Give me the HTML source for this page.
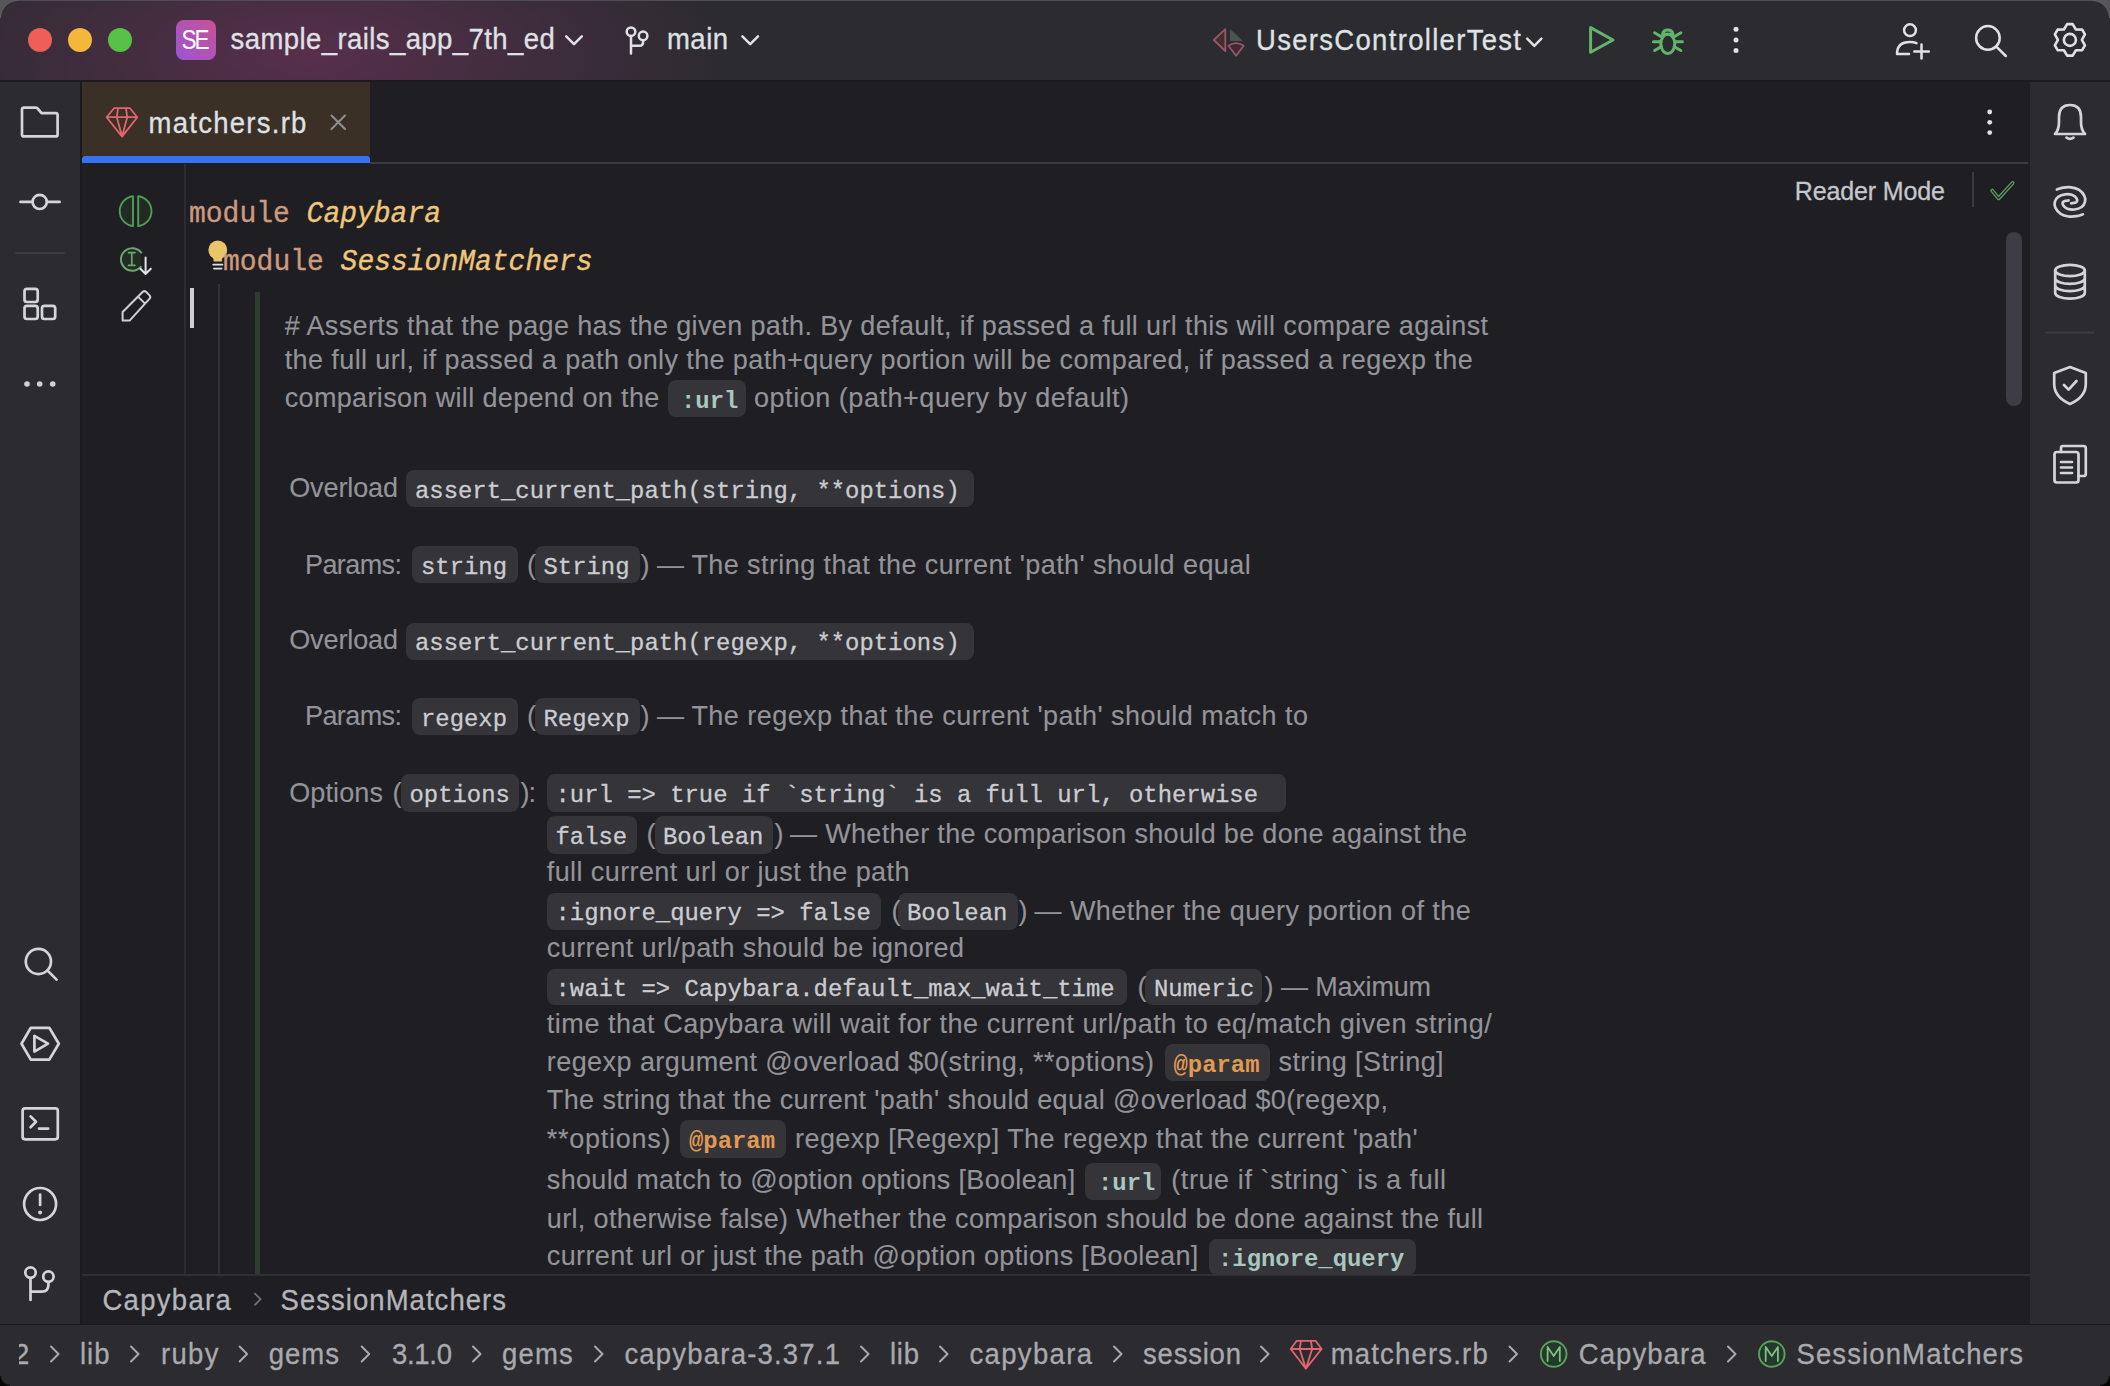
<!DOCTYPE html>
<html><head><meta charset="utf-8">
<style>
html,body{margin:0;padding:0;width:2110px;height:1386px;overflow:hidden;background:#1e1f22;font-family:"Liberation Sans",sans-serif}
.p{position:absolute}
.t{position:absolute;white-space:pre;line-height:normal}
.b{position:absolute}
</style></head><body>
<!-- title bar -->
<div class="p" style="left:0;top:0;width:2110px;height:80px;background:#2c2b30"></div>
<div class="p" style="left:0;top:0;width:1100px;height:80px;background:radial-gradient(ellipse 420px 170px at 310px 55px, rgba(140,52,110,0.45), rgba(140,52,110,0.16) 62%, rgba(140,52,110,0) 100%)"></div>
<div class="p" style="left:0;top:80px;width:2110px;height:2px;background:#1b1a1f"></div>
<div class="p" style="left:0;top:0;width:2110px;height:1px;background:#4f4e55"></div>
<div class="p" style="left:0;top:0;width:18px;height:18px;background:radial-gradient(circle at 18px 18px, rgba(0,0,0,0) 16.5px, #5b5b60 17.5px, #56565a 19px)"></div>
<div class="p" style="left:2092px;top:0;width:18px;height:18px;background:radial-gradient(circle at 0px 18px, rgba(0,0,0,0) 16.5px, #5b5b60 17.5px, #56565a 19px)"></div>
<!-- left strip -->
<div class="p" style="left:0;top:82px;width:80px;height:1243px;background:#2c2b30"></div>
<div class="p" style="left:80px;top:82px;width:2px;height:1243px;background:#1b1a1f"></div>
<!-- right strip -->
<div class="p" style="left:2030px;top:82px;width:80px;height:1243px;background:#2c2b30"></div>
<!-- editor -->
<div class="p" style="left:82px;top:82px;width:1948px;height:1243px;background:#1f1e23"></div>
<!-- tab -->
<div class="p" style="left:82px;top:82px;width:288px;height:74px;background:#3a3025"></div>
<div class="p" style="left:82px;top:156px;width:288px;height:7px;background:#3574f0;border-radius:3px 3px 0 0"></div>
<div class="p" style="left:370px;top:162px;width:1658px;height:2px;background:#393b40"></div>
<!-- gutter line -->
<div class="p" style="left:184px;top:164px;width:2px;height:1110px;background:#2b2d30"></div>
<!-- indent guides -->
<div class="p" style="left:218px;top:284px;width:2px;height:990px;background:#313236"></div>
<div class="p" style="left:255px;top:292px;width:5px;height:982px;background:#2f3d31"></div>
<!-- caret -->
<div class="p" style="left:190px;top:288px;width:4px;height:40px;background:#ced0d6"></div>
<!-- scrollbar -->
<div class="p" style="left:2006px;top:232px;width:16px;height:174px;background:#3e3d43;border-radius:8px"></div>
<!-- reader mode separator -->
<div class="p" style="left:1972px;top:172px;width:2px;height:35px;background:#393b40"></div>
<!-- breadcrumbs bar -->
<div class="p" style="left:82px;top:1274px;width:1948px;height:2px;background:#2f3034"></div>
<!-- status bar -->
<div class="p" style="left:0;top:1325px;width:2110px;height:61px;background:#2c2b30"></div>
<div class="p" style="left:0;top:1324px;width:2110px;height:1px;background:#1b1a1f"></div>
<div class="p" style="left:0;top:1376px;width:10px;height:10px;background:radial-gradient(circle at 10px 0px, rgba(0,0,0,0) 8px, #050505 10px)"></div>
<div class="p" style="left:2100px;top:1376px;width:10px;height:10px;background:radial-gradient(circle at 0px 0px, rgba(0,0,0,0) 8px, #050505 10px)"></div>
<div class="b" style="left:668.4px;top:380.2px;width:77.4px;height:37.1px;background:#343439;border-radius:8px"></div>
<div class="b" style="left:406.0px;top:470.3px;width:567.5px;height:37.0px;background:#343439;border-radius:8px"></div>
<div class="b" style="left:412.4px;top:546.3px;width:105.3px;height:36.9px;background:#343439;border-radius:8px"></div>
<div class="b" style="left:535.0px;top:546.3px;width:104.7px;height:36.9px;background:#343439;border-radius:8px"></div>
<div class="b" style="left:406.0px;top:622.7px;width:567.5px;height:36.9px;background:#343439;border-radius:8px"></div>
<div class="b" style="left:412.4px;top:697.8px;width:105.3px;height:37.7px;background:#343439;border-radius:8px"></div>
<div class="b" style="left:535.0px;top:697.8px;width:104.7px;height:37.7px;background:#343439;border-radius:8px"></div>
<div class="b" style="left:400.6px;top:774.3px;width:118.8px;height:37.5px;background:#343439;border-radius:8px"></div>
<div class="b" style="left:546.5px;top:774.3px;width:739.4px;height:37.5px;background:#343439;border-radius:8px"></div>
<div class="b" style="left:546.5px;top:816.2px;width:90.7px;height:37.4px;background:#343439;border-radius:8px"></div>
<div class="b" style="left:654.5px;top:816.2px;width:118.2px;height:37.4px;background:#343439;border-radius:8px"></div>
<div class="b" style="left:546.5px;top:892.6px;width:334.8px;height:37.0px;background:#343439;border-radius:8px"></div>
<div class="b" style="left:898.0px;top:892.6px;width:119.8px;height:37.0px;background:#343439;border-radius:8px"></div>
<div class="b" style="left:546.5px;top:969.0px;width:580.5px;height:36.2px;background:#343439;border-radius:8px"></div>
<div class="b" style="left:1145.4px;top:969.0px;width:117.1px;height:36.2px;background:#343439;border-radius:8px"></div>
<div class="b" style="left:1164.6px;top:1044.4px;width:105.3px;height:36.9px;background:#343439;border-radius:8px"></div>
<div class="b" style="left:680.3px;top:1120.3px;width:105.3px;height:37.4px;background:#343439;border-radius:8px"></div>
<div class="b" style="left:1085.0px;top:1162.7px;width:76.4px;height:36.9px;background:#343439;border-radius:8px"></div>
<div class="b" style="left:1209.0px;top:1238.6px;width:207.0px;height:36.4px;background:#343439;border-radius:8px"></div>
<svg class="p" style="left:0;top:0" width="2110" height="1386" viewBox="0 0 2110 1386" fill="none" stroke-linecap="round" stroke-linejoin="round">
<defs>
<linearGradient id="se" x1="0" y1="1" x2="1" y2="0"><stop offset="0" stop-color="#9b55d6"/><stop offset="1" stop-color="#c85294"/></linearGradient>
</defs>
<!-- traffic lights -->
<circle cx="40" cy="40" r="12" fill="#ee5f57"/>
<circle cx="80" cy="40" r="12" fill="#f4b73b"/>
<circle cx="120" cy="40" r="12" fill="#57c247"/>
<!-- SE badge -->
<rect x="176" y="20" width="40" height="40" rx="8" fill="url(#se)"/>
<g stroke="#dfe1e5" stroke-width="2.5">
<!-- chevrons -->
<polyline points="566.2,36.4 574,44.2 581.8,36.4"/>
<polyline points="742.4,36.4 750.2,44.2 758,36.4"/>
<polyline points="1527.2,38.7 1534.3,45.8 1541.4,38.7"/>
<!-- branch -->
<circle cx="631" cy="31.7" r="4.3"/>
<circle cx="643.1" cy="35.9" r="4.3"/>
<path d="M631 36 V53.6 M643.1 40.2 V42 Q643.1 45.8 639.3 45.8 H631"/>
<!-- add user -->
<circle cx="1910" cy="30.2" r="5.9"/>
<path d="M1897 54 H1909 M1897 54 Q1897 42 1910 42 Q1914 42 1916.5 43.2 M1921.5 44.5 V58.5 M1914.3 51.5 H1928.8"/>
<!-- search -->
<circle cx="1987.9" cy="37.9" r="11.8"/>
<path d="M1996.6 46.8 L2005.8 56"/>
<!-- gear inner -->
<circle cx="2069.9" cy="39.9" r="6" stroke-width="2.6"/>
</g>
<path stroke="#dfe1e5" stroke-width="2.6" d="M2067.12 24.14 L2072.68 24.14 L2075.90 29.51 L2082.16 29.62 L2084.94 34.43 L2081.90 39.90 L2084.94 45.37 L2082.16 50.18 L2075.90 50.29 L2072.68 55.66 L2067.12 55.66 L2063.90 50.29 L2057.64 50.18 L2054.86 45.37 L2057.90 39.90 L2054.86 34.43 L2057.64 29.62 L2063.90 29.51 Z"/>
<!-- test icon -->
<path d="M1213.8 40 L1225.3 29.2 V51 Z" stroke="#9a5566" stroke-width="1.8" fill="rgba(150,60,60,0.2)"/>
<path d="M1230 29 L1243 41 H1230 Z" fill="#47564e"/>
<path d="M1228.5 45.7 Q1236 40.5 1243.7 45.7 L1236.1 55.8 Z" stroke="#9a5566" stroke-width="1.8" fill="rgba(120,40,60,0.25)"/>
<!-- play/bug -->
<g stroke="#62b46a" stroke-width="3">
<path d="M1590.6 27.6 L1613 40 L1590.6 52.3 Z"/>
<ellipse cx="1667.8" cy="43.8" rx="7" ry="9.6"/>
<path d="M1662.6 34.2 A5.3 5.3 0 0 1 1673 34.2 Z"/>
<path d="M1653.4 41.7 H1661 M1674.6 41.7 H1682.4 M1654.6 32.8 L1661.4 36.8 M1680.9 32.8 L1674.1 36.8 M1654.6 50.5 L1661.4 46.6 M1680.9 50.5 L1674.1 46.6"/>
</g>
<g fill="#dfe1e5">
<circle cx="1736" cy="29.2" r="2.5"/><circle cx="1736" cy="39.9" r="2.5"/><circle cx="1736" cy="50.6" r="2.5"/>
<circle cx="1989.7" cy="112" r="2.4"/><circle cx="1989.7" cy="122.3" r="2.4"/><circle cx="1989.7" cy="132.6" r="2.4"/>
</g>
<!-- tab ruby -->
<g stroke="#e0656f" stroke-width="1.8">
<path d="M114 108.2 H130 L137.3 117.2 L122.1 136.6 L106.6 117.2 Z M106.6 117.2 H137.3 M118 108.2 L116.8 117.2 L122.1 136.6 L127.2 117.2 L126 108.2"/>
</g>
<!-- tab close -->
<path d="M331.5 115.5 L345 129 M345 115.5 L331.5 129" stroke="#8e9095" stroke-width="2"/>
<!-- reader check -->
<path d="M1992.2 190.6 L1998.6 198.4 L2012.6 183" stroke="#5e9c64" stroke-width="3.8"/><path d="M1992.2 190.6 L1998.6 198.4 L2012.6 183" stroke="#1f1e23" stroke-width="1.2"/>
<!-- left strip icons -->
<g stroke="#d4d5db" stroke-width="2.7">
<path d="M24 107.6 H35.8 Q37 107.6 37.8 108.6 L41.5 113.1 H55.6 Q57.6 113.1 57.6 115.1 V134.4 Q57.6 136.4 55.6 136.4 H24 Q22 136.4 22 134.4 V109.6 Q22 107.6 24 107.6 Z"/>
<path d="M20.5 201.9 H32.4 M47 201.9 H59.6"/>
<circle cx="39.7" cy="201.9" r="7.1"/>
<rect x="24.5" y="288.8" width="13.2" height="13.2" rx="2.5"/>
<rect x="24.5" y="305.8" width="13.2" height="13.2" rx="2.5"/>
<rect x="42" y="305.8" width="13.2" height="13.2" rx="2.5"/>
<circle cx="38.4" cy="961.5" r="12.6"/>
<path d="M47.6 970.6 L56.6 979.6"/>
<path d="M21.5 1043.7 L30.8 1027.8 H49.3 L58.8 1043.7 L49.3 1059.6 H30.8 Z"/>
<path d="M34.4 1035.8 V1051.6 L48 1043.7 Z"/>
<rect x="22.6" y="1108.3" width="35.2" height="31" rx="2.5"/>
<path d="M30.6 1116.4 L36 1121.8 L30.6 1127.2 M39 1128.6 H48.2"/>
<circle cx="40.1" cy="1204" r="16"/>
<path d="M40.1 1194.6 V1205"/>
<circle cx="30.5" cy="1272.6" r="5.2"/>
<circle cx="48.4" cy="1276.6" r="5.2"/>
<path d="M30.5 1278 V1300 M48.4 1282 V1285 Q48.4 1291.6 41.8 1291.6 H30.5"/>
</g>
<g fill="#ced0d6"><circle cx="27" cy="384" r="2.8"/><circle cx="39.7" cy="384" r="2.8"/><circle cx="52.7" cy="384" r="2.8"/><circle cx="40.1" cy="1212.4" r="2"/></g>
<path d="M16 252.9 H64" stroke="#3c3d42" stroke-width="2"/>
<!-- right strip icons -->
<g stroke="#d4d5db" stroke-width="2.7">
<path d="M2055 134 Q2059 130 2059 122 V117 Q2059 105 2070 105 Q2081 105 2081 117 V122 Q2081 130 2085 134 Z"/>
<path d="M2066.5 137.6 Q2070 140 2073.5 137.6"/>
<path d="M2056.89 189.52 C2057.95 189.21 2060.86 187.99 2063.24 187.62 C2065.62 187.25 2068.53 186.93 2071.17 187.30 C2073.82 187.67 2076.92 188.41 2079.11 189.84 C2081.31 191.27 2083.37 193.86 2084.35 195.87 C2085.33 197.88 2085.43 200.05 2084.98 201.90 C2084.53 203.76 2083.37 205.71 2081.65 206.98 C2079.93 208.25 2077.05 209.23 2074.67 209.52 C2072.29 209.81 2069.30 209.47 2067.37 208.73 C2065.43 207.99 2063.71 206.27 2063.08 205.08 C2062.44 203.89 2062.63 202.35 2063.56 201.59 C2064.48 200.82 2067.79 200.66 2068.63 200.48 M2082.92 214.29 C2081.86 214.60 2078.95 215.82 2076.57 216.19 C2074.19 216.56 2071.28 216.88 2068.63 216.51 C2065.99 216.14 2062.89 215.40 2060.70 213.97 C2058.50 212.54 2056.44 209.95 2055.46 207.94 C2054.48 205.93 2054.38 203.76 2054.83 201.90 C2055.28 200.05 2056.44 198.10 2058.16 196.83 C2059.88 195.56 2062.76 194.58 2065.14 194.29 C2067.52 193.99 2070.51 194.34 2072.44 195.08 C2074.38 195.82 2076.10 197.54 2076.73 198.73 C2077.37 199.92 2077.18 201.46 2076.25 202.22 C2075.33 202.99 2072.02 203.15 2071.17 203.33"/>
<ellipse cx="2070" cy="270.5" rx="14.8" ry="5.6"/>
<path d="M2055.2 270.5 V293 A14.8 5.6 0 0 0 2084.8 293 V270.5 M2055.2 278.2 A14.8 5.6 0 0 0 2084.8 278.2 M2055.2 285.6 A14.8 5.6 0 0 0 2084.8 285.6"/>
<path d="M2070 367 L2085.8 373 V384 Q2085.8 397 2070 404 Q2054.2 397 2054.2 384 V373 Z"/>
<path d="M2064 385 L2068.6 389.6 L2076.5 381"/>
<rect x="2054.5" y="452" width="24" height="30.5" rx="2.5"/>
<path d="M2061 452 V448 Q2061 446 2063 446 H2083.5 Q2085.8 446 2085.8 448.3 V474 Q2085.8 476 2083.5 476 H2078.5"/>
<path d="M2061 462 H2072 M2061 467.5 H2072 M2061 473 H2072"/>
</g>
<path d="M2046.4 332.4 H2093.3" stroke="#3c3d42" stroke-width="2"/>
<!-- gutter icons -->
<g stroke="#4f9d58" stroke-width="1.9">
<path d="M133 196.3 A15 15 0 0 0 133 226.1 Z" fill="#222a24"/>
<path d="M138.2 196.3 A15 15 0 0 1 138.2 226.1 Z" fill="#222a24"/>
<path d="M140.8 266.8 A11.3 11.3 0 1 1 141.2 252.6" stroke="#6aa772" fill="#232c25"/>
<path d="M128.5 252.6 H135 M131.8 252.6 V265.3 M128.5 265.3 H135" stroke="#6aa772" stroke-width="1.7"/>
</g>
<path d="M145.6 257.6 V273.8 M140.4 268.8 L145.6 274 L150.8 268.8" stroke="#dfe1e5" stroke-width="2"/>
<path d="M122.6 312 L142.8 291.8 Q144.4 290.4 146 291.8 L149.6 295.4 Q151 297 149.6 298.6 L129.6 320.6 H122.6 Z M138 296.6 L145 303.6" stroke="#ced0d6" stroke-width="2"/>
<!-- lightbulb -->
<circle cx="217.8" cy="250" r="9.4" fill="#e9c46b"/>
<path d="M213 254 H222.5 L221.8 261.5 H213.7 Z" fill="#e9c46b"/>
<path d="M213.2 264.6 H222.4 M214 268.6 H221.6" stroke="#dfe1e5" stroke-width="1.8"/>
<!-- breadcrumb chevron -->
<path d="M255 1293.6 L260.5 1299.2 L255 1304.8" stroke="#6f7176" stroke-width="1.8"/>
<!-- status chevrons -->
<g stroke="#a8aaae" stroke-width="2">
<path d="M51 1346.5 L58.5 1354 L51 1361.5"/>
<path d="M131 1346.5 L138.5 1354 L131 1361.5"/>
<path d="M239.6 1346.5 L247.1 1354 L239.6 1361.5"/>
<path d="M361.7 1346.5 L369.2 1354 L361.7 1361.5"/>
<path d="M473 1346.5 L480.5 1354 L473 1361.5"/>
<path d="M595 1346.5 L602.5 1354 L595 1361.5"/>
<path d="M861 1346.5 L868.5 1354 L861 1361.5"/>
<path d="M940 1346.5 L947.5 1354 L940 1361.5"/>
<path d="M1114 1346.5 L1121.5 1354 L1114 1361.5"/>
<path d="M1261 1346.5 L1268.5 1354 L1261 1361.5"/>
<path d="M1509.5 1346.5 L1517 1354 L1509.5 1361.5"/>
<path d="M1728 1346.5 L1735.5 1354 L1728 1361.5"/>
</g>
<!-- status ruby -->
<path d="M1296.7 1340.8 H1315.6 L1321.6 1349 L1305.9 1368.6 L1290.7 1349 Z M1290.7 1349 H1321.6 M1301 1340.8 L1299.6 1349 L1305.9 1368.6 L1312.2 1349 L1310.8 1340.8" stroke="#e0656f" stroke-width="1.8"/>
<!-- M icons -->
<g stroke="#5aa05e" stroke-width="1.9" fill="#25392a">
<circle cx="1553.7" cy="1354" r="12.8"/>
<circle cx="1771.8" cy="1354" r="12.8"/>
</g>
<g stroke="#7fbf82" stroke-width="1.8">
<path d="M1547.6 1361 V1347 L1553.7 1356 L1559.8 1347 V1361"/>
<path d="M1765.7 1361 V1347 L1771.8 1356 L1777.9 1347 V1361"/>
</g>
</svg>

<div class="t" style="left:181.5px;top:29.4px;font-family:'Liberation Sans';font-size:22.5px;color:#ffffff;font-weight:400;font-style:normal;letter-spacing:-2.016px;transform:scaleY(1.2);transform-origin:0 20.4px">SE</div>
<div class="t" style="left:230.5px;top:24.4px;font-family:'Liberation Sans';font-size:27.5px;color:#dfe1e5;font-weight:400;font-style:normal;letter-spacing:0.421px;;-webkit-text-stroke:0.3px #dfe1e5;transform:scaleY(1.05);transform-origin:0 24.9px">sample_rails_app_7th_ed</div>
<div class="t" style="left:667.0px;top:24.4px;font-family:'Liberation Sans';font-size:27.5px;color:#dfe1e5;font-weight:400;font-style:normal;letter-spacing:0.465px;;-webkit-text-stroke:0.3px #dfe1e5;transform:scaleY(1.05);transform-origin:0 24.9px">main</div>
<div class="t" style="left:1256.0px;top:24.7px;font-family:'Liberation Sans';font-size:27.5px;color:#dfe1e5;font-weight:400;font-style:normal;letter-spacing:1.308px;;-webkit-text-stroke:0.3px #dfe1e5;transform:scaleY(1.05);transform-origin:0 24.9px">UsersControllerTest</div>
<div class="t" style="left:148.6px;top:107.8px;font-family:'Liberation Sans';font-size:27.5px;color:#dfe1e5;font-weight:400;font-style:normal;letter-spacing:1.262px;;-webkit-text-stroke:0.3px #dfe1e5;transform:scaleY(1.05);transform-origin:0 24.9px">matchers.rb</div>
<div class="t" style="left:1794.8px;top:177.4px;font-family:'Liberation Sans';font-size:25px;color:#c5c7cc;font-weight:400;font-style:normal;letter-spacing:-0.148px;;-webkit-text-stroke:0.3px #c5c7cc;transform:scaleY(1.05);transform-origin:0 22.6px">Reader Mode</div>
<div class="t" style="left:189.0px;top:198.7px;font-family:'Liberation Mono';font-size:28px;color:#cd9a7e;font-weight:400;font-style:normal;letter-spacing:0.000px;transform:scaleY(1.07);transform-origin:0 23.3px;-webkit-text-stroke:0.35px currentColor">module</div>
<div class="t" style="left:306.6px;top:198.7px;font-family:'Liberation Mono';font-size:28px;color:#eec77c;font-weight:400;font-style:italic;letter-spacing:0.000px;transform:scaleY(1.07);transform-origin:0 23.3px;-webkit-text-stroke:0.35px currentColor">Capybara</div>
<div class="t" style="left:223.0px;top:246.7px;font-family:'Liberation Mono';font-size:28px;color:#cd9a7e;font-weight:400;font-style:normal;letter-spacing:0.000px;transform:scaleY(1.07);transform-origin:0 23.3px;-webkit-text-stroke:0.35px currentColor">module</div>
<div class="t" style="left:340.6px;top:246.7px;font-family:'Liberation Mono';font-size:28px;color:#eec77c;font-weight:400;font-style:italic;letter-spacing:0.000px;transform:scaleY(1.07);transform-origin:0 23.3px;-webkit-text-stroke:0.35px currentColor">SessionMatchers</div>
<div class="t" style="left:284.7px;top:311.4px;font-family:'Liberation Sans';font-size:27px;color:#939499;font-weight:400;font-style:normal;letter-spacing:0.368px;;-webkit-text-stroke:0.12px #939499;transform:scaleY(1.05);transform-origin:0 24.4px"># Asserts that the page has the given path. By default, if passed a full url this will compare against</div>
<div class="t" style="left:284.7px;top:345.4px;font-family:'Liberation Sans';font-size:27px;color:#939499;font-weight:400;font-style:normal;letter-spacing:0.398px;;-webkit-text-stroke:0.12px #939499;transform:scaleY(1.05);transform-origin:0 24.4px">the full url, if passed a path only the path+query portion will be compared, if passed a regexp the</div>
<div class="t" style="left:284.7px;top:383.1px;font-family:'Liberation Sans';font-size:27px;color:#939499;font-weight:400;font-style:normal;letter-spacing:0.353px;;-webkit-text-stroke:0.12px #939499;transform:scaleY(1.05);transform-origin:0 24.4px">comparison will depend on the</div>
<div class="t" style="left:681.0px;top:387.8px;font-family:'Liberation Mono';font-size:23.9px;color:#a9c7bf;font-weight:700;font-style:normal;letter-spacing:0.000px;">:url</div>
<div class="t" style="left:754.0px;top:383.1px;font-family:'Liberation Sans';font-size:27px;color:#939499;font-weight:400;font-style:normal;letter-spacing:0.535px;;-webkit-text-stroke:0.12px #939499;transform:scaleY(1.05);transform-origin:0 24.4px">option (path+query by default)</div>
<div class="t" style="left:289.2px;top:473.1px;font-family:'Liberation Sans';font-size:27px;color:#939499;font-weight:400;font-style:normal;letter-spacing:-0.108px;;-webkit-text-stroke:0.12px #939499;transform:scaleY(1.05);transform-origin:0 24.4px">Overload</div>
<div class="t" style="left:415.0px;top:477.8px;font-family:'Liberation Mono';font-size:23.9px;color:#cbccd1;font-weight:400;font-style:normal;letter-spacing:0.000px;-webkit-text-stroke:0.3px #cbccd1">assert_current_path(string, **options)</div>
<div class="t" style="left:305.0px;top:549.5px;font-family:'Liberation Sans';font-size:27px;color:#939499;font-weight:400;font-style:normal;letter-spacing:-0.588px;;-webkit-text-stroke:0.12px #939499;transform:scaleY(1.05);transform-origin:0 24.4px">Params:</div>
<div class="t" style="left:421.0px;top:553.7px;font-family:'Liberation Mono';font-size:23.9px;color:#cbccd1;font-weight:400;font-style:normal;letter-spacing:0.000px;-webkit-text-stroke:0.3px #cbccd1">string</div>
<div class="t" style="left:527.0px;top:549.5px;font-family:'Liberation Sans';font-size:27px;color:#939499;font-weight:400;font-style:normal;letter-spacing:0.000px;;-webkit-text-stroke:0.12px #939499;transform:scaleY(1.05);transform-origin:0 24.4px">(</div>
<div class="t" style="left:543.5px;top:553.7px;font-family:'Liberation Mono';font-size:23.9px;color:#cbccd1;font-weight:400;font-style:normal;letter-spacing:0.000px;-webkit-text-stroke:0.3px #cbccd1">String</div>
<div class="t" style="left:640.5px;top:549.5px;font-family:'Liberation Sans';font-size:27px;color:#939499;font-weight:400;font-style:normal;letter-spacing:0.000px;;-webkit-text-stroke:0.12px #939499;transform:scaleY(1.05);transform-origin:0 24.4px">)</div>
<div class="t" style="left:657.0px;top:549.5px;font-family:'Liberation Sans';font-size:27px;color:#939499;font-weight:400;font-style:normal;letter-spacing:0.000px;;-webkit-text-stroke:0.12px #939499;transform:scaleY(1.05);transform-origin:0 24.4px">—</div>
<div class="t" style="left:691.4px;top:549.5px;font-family:'Liberation Sans';font-size:27px;color:#939499;font-weight:400;font-style:normal;letter-spacing:0.416px;;-webkit-text-stroke:0.12px #939499;transform:scaleY(1.05);transform-origin:0 24.4px">The string that the current &#x27;path&#x27; should equal</div>
<div class="t" style="left:289.2px;top:625.4px;font-family:'Liberation Sans';font-size:27px;color:#939499;font-weight:400;font-style:normal;letter-spacing:-0.108px;;-webkit-text-stroke:0.12px #939499;transform:scaleY(1.05);transform-origin:0 24.4px">Overload</div>
<div class="t" style="left:415.0px;top:630.1px;font-family:'Liberation Mono';font-size:23.9px;color:#cbccd1;font-weight:400;font-style:normal;letter-spacing:0.000px;-webkit-text-stroke:0.3px #cbccd1">assert_current_path(regexp, **options)</div>
<div class="t" style="left:305.0px;top:701.3px;font-family:'Liberation Sans';font-size:27px;color:#939499;font-weight:400;font-style:normal;letter-spacing:-0.588px;;-webkit-text-stroke:0.12px #939499;transform:scaleY(1.05);transform-origin:0 24.4px">Params:</div>
<div class="t" style="left:421.0px;top:705.8px;font-family:'Liberation Mono';font-size:23.9px;color:#cbccd1;font-weight:400;font-style:normal;letter-spacing:0.000px;-webkit-text-stroke:0.3px #cbccd1">regexp</div>
<div class="t" style="left:527.0px;top:701.3px;font-family:'Liberation Sans';font-size:27px;color:#939499;font-weight:400;font-style:normal;letter-spacing:0.000px;;-webkit-text-stroke:0.12px #939499;transform:scaleY(1.05);transform-origin:0 24.4px">(</div>
<div class="t" style="left:543.5px;top:705.8px;font-family:'Liberation Mono';font-size:23.9px;color:#cbccd1;font-weight:400;font-style:normal;letter-spacing:0.000px;-webkit-text-stroke:0.3px #cbccd1">Regexp</div>
<div class="t" style="left:640.5px;top:701.3px;font-family:'Liberation Sans';font-size:27px;color:#939499;font-weight:400;font-style:normal;letter-spacing:0.000px;;-webkit-text-stroke:0.12px #939499;transform:scaleY(1.05);transform-origin:0 24.4px">)</div>
<div class="t" style="left:657.0px;top:701.3px;font-family:'Liberation Sans';font-size:27px;color:#939499;font-weight:400;font-style:normal;letter-spacing:0.000px;;-webkit-text-stroke:0.12px #939499;transform:scaleY(1.05);transform-origin:0 24.4px">—</div>
<div class="t" style="left:691.4px;top:701.3px;font-family:'Liberation Sans';font-size:27px;color:#939499;font-weight:400;font-style:normal;letter-spacing:0.458px;;-webkit-text-stroke:0.12px #939499;transform:scaleY(1.05);transform-origin:0 24.4px">The regexp that the current &#x27;path&#x27; should match to</div>
<div class="t" style="left:289.2px;top:778.0px;font-family:'Liberation Sans';font-size:27px;color:#939499;font-weight:400;font-style:normal;letter-spacing:0.108px;;-webkit-text-stroke:0.12px #939499;transform:scaleY(1.05);transform-origin:0 24.4px">Options</div>
<div class="t" style="left:392.5px;top:778.0px;font-family:'Liberation Sans';font-size:27px;color:#939499;font-weight:400;font-style:normal;letter-spacing:0.000px;;-webkit-text-stroke:0.12px #939499;transform:scaleY(1.05);transform-origin:0 24.4px">(</div>
<div class="t" style="left:409.5px;top:782.2px;font-family:'Liberation Mono';font-size:23.9px;color:#cbccd1;font-weight:400;font-style:normal;letter-spacing:0.000px;-webkit-text-stroke:0.3px #cbccd1">options</div>
<div class="t" style="left:520.5px;top:778.0px;font-family:'Liberation Sans';font-size:27px;color:#939499;font-weight:400;font-style:normal;letter-spacing:-0.995px;;-webkit-text-stroke:0.12px #939499;transform:scaleY(1.05);transform-origin:0 24.4px">):</div>
<div class="t" style="left:555.5px;top:782.2px;font-family:'Liberation Mono';font-size:23.9px;color:#cbccd1;font-weight:400;font-style:normal;letter-spacing:0.000px;-webkit-text-stroke:0.3px #cbccd1">:url =&gt; true if `string` is a full url, otherwise </div>
<div class="t" style="left:555.5px;top:824.0px;font-family:'Liberation Mono';font-size:23.9px;color:#cbccd1;font-weight:400;font-style:normal;letter-spacing:0.000px;-webkit-text-stroke:0.3px #cbccd1">false</div>
<div class="t" style="left:646.5px;top:819.4px;font-family:'Liberation Sans';font-size:27px;color:#939499;font-weight:400;font-style:normal;letter-spacing:0.000px;;-webkit-text-stroke:0.12px #939499;transform:scaleY(1.05);transform-origin:0 24.4px">(</div>
<div class="t" style="left:663.0px;top:824.0px;font-family:'Liberation Mono';font-size:23.9px;color:#cbccd1;font-weight:400;font-style:normal;letter-spacing:0.000px;-webkit-text-stroke:0.3px #cbccd1">Boolean</div>
<div class="t" style="left:774.5px;top:819.4px;font-family:'Liberation Sans';font-size:27px;color:#939499;font-weight:400;font-style:normal;letter-spacing:0.000px;;-webkit-text-stroke:0.12px #939499;transform:scaleY(1.05);transform-origin:0 24.4px">)</div>
<div class="t" style="left:790.0px;top:819.4px;font-family:'Liberation Sans';font-size:27px;color:#939499;font-weight:400;font-style:normal;letter-spacing:0.332px;;-webkit-text-stroke:0.12px #939499;transform:scaleY(1.05);transform-origin:0 24.4px">— Whether the comparison should be done against the</div>
<div class="t" style="left:546.8px;top:856.9px;font-family:'Liberation Sans';font-size:27px;color:#939499;font-weight:400;font-style:normal;letter-spacing:0.404px;;-webkit-text-stroke:0.12px #939499;transform:scaleY(1.05);transform-origin:0 24.4px">full current url or just the path</div>
<div class="t" style="left:555.5px;top:900.1px;font-family:'Liberation Mono';font-size:23.9px;color:#cbccd1;font-weight:400;font-style:normal;letter-spacing:0.000px;-webkit-text-stroke:0.3px #cbccd1">:ignore_query =&gt; false</div>
<div class="t" style="left:891.5px;top:895.8px;font-family:'Liberation Sans';font-size:27px;color:#939499;font-weight:400;font-style:normal;letter-spacing:0.000px;;-webkit-text-stroke:0.12px #939499;transform:scaleY(1.05);transform-origin:0 24.4px">(</div>
<div class="t" style="left:907.0px;top:900.1px;font-family:'Liberation Mono';font-size:23.9px;color:#cbccd1;font-weight:400;font-style:normal;letter-spacing:0.000px;-webkit-text-stroke:0.3px #cbccd1">Boolean</div>
<div class="t" style="left:1018.6px;top:895.8px;font-family:'Liberation Sans';font-size:27px;color:#939499;font-weight:400;font-style:normal;letter-spacing:0.000px;;-webkit-text-stroke:0.12px #939499;transform:scaleY(1.05);transform-origin:0 24.4px">)</div>
<div class="t" style="left:1034.5px;top:895.8px;font-family:'Liberation Sans';font-size:27px;color:#939499;font-weight:400;font-style:normal;letter-spacing:0.438px;;-webkit-text-stroke:0.12px #939499;transform:scaleY(1.05);transform-origin:0 24.4px">— Whether the query portion of the</div>
<div class="t" style="left:546.8px;top:932.8px;font-family:'Liberation Sans';font-size:27px;color:#939499;font-weight:400;font-style:normal;letter-spacing:0.407px;;-webkit-text-stroke:0.12px #939499;transform:scaleY(1.05);transform-origin:0 24.4px">current url/path should be ignored</div>
<div class="t" style="left:555.5px;top:975.9px;font-family:'Liberation Mono';font-size:23.9px;color:#cbccd1;font-weight:400;font-style:normal;letter-spacing:0.000px;-webkit-text-stroke:0.3px #cbccd1">:wait =&gt; Capybara.default_max_wait_time</div>
<div class="t" style="left:1137.5px;top:972.2px;font-family:'Liberation Sans';font-size:27px;color:#939499;font-weight:400;font-style:normal;letter-spacing:0.000px;;-webkit-text-stroke:0.12px #939499;transform:scaleY(1.05);transform-origin:0 24.4px">(</div>
<div class="t" style="left:1154.0px;top:975.9px;font-family:'Liberation Mono';font-size:23.9px;color:#cbccd1;font-weight:400;font-style:normal;letter-spacing:0.000px;-webkit-text-stroke:0.3px #cbccd1">Numeric</div>
<div class="t" style="left:1264.5px;top:972.2px;font-family:'Liberation Sans';font-size:27px;color:#939499;font-weight:400;font-style:normal;letter-spacing:0.000px;;-webkit-text-stroke:0.12px #939499;transform:scaleY(1.05);transform-origin:0 24.4px">)</div>
<div class="t" style="left:1281.0px;top:972.2px;font-family:'Liberation Sans';font-size:27px;color:#939499;font-weight:400;font-style:normal;letter-spacing:-0.188px;;-webkit-text-stroke:0.12px #939499;transform:scaleY(1.05);transform-origin:0 24.4px">— Maximum</div>
<div class="t" style="left:546.8px;top:1008.9px;font-family:'Liberation Sans';font-size:27px;color:#939499;font-weight:400;font-style:normal;letter-spacing:0.532px;;-webkit-text-stroke:0.12px #939499;transform:scaleY(1.05);transform-origin:0 24.4px">time that Capybara will wait for the current url/path to eq/match given string/</div>
<div class="t" style="left:546.8px;top:1047.1px;font-family:'Liberation Sans';font-size:27px;color:#939499;font-weight:400;font-style:normal;letter-spacing:0.434px;;-webkit-text-stroke:0.12px #939499;transform:scaleY(1.05);transform-origin:0 24.4px">regexp argument @overload $0(string, **options)</div>
<div class="t" style="left:1173.5px;top:1051.8px;font-family:'Liberation Mono';font-size:23.9px;color:#e09a52;font-weight:700;font-style:normal;letter-spacing:0.000px;">@param</div>
<div class="t" style="left:1278.5px;top:1047.1px;font-family:'Liberation Sans';font-size:27px;color:#939499;font-weight:400;font-style:normal;letter-spacing:0.431px;;-webkit-text-stroke:0.12px #939499;transform:scaleY(1.05);transform-origin:0 24.4px">string [String]</div>
<div class="t" style="left:546.8px;top:1085.3px;font-family:'Liberation Sans';font-size:27px;color:#939499;font-weight:400;font-style:normal;letter-spacing:0.388px;;-webkit-text-stroke:0.12px #939499;transform:scaleY(1.05);transform-origin:0 24.4px">The string that the current &#x27;path&#x27; should equal @overload $0(regexp,</div>
<div class="t" style="left:546.8px;top:1123.5px;font-family:'Liberation Sans';font-size:27px;color:#939499;font-weight:400;font-style:normal;letter-spacing:0.726px;;-webkit-text-stroke:0.12px #939499;transform:scaleY(1.05);transform-origin:0 24.4px">**options)</div>
<div class="t" style="left:689.0px;top:1128.1px;font-family:'Liberation Mono';font-size:23.9px;color:#e09a52;font-weight:700;font-style:normal;letter-spacing:0.000px;">@param</div>
<div class="t" style="left:795.0px;top:1123.5px;font-family:'Liberation Sans';font-size:27px;color:#939499;font-weight:400;font-style:normal;letter-spacing:0.439px;;-webkit-text-stroke:0.12px #939499;transform:scaleY(1.05);transform-origin:0 24.4px">regexp [Regexp] The regexp that the current &#x27;path&#x27;</div>
<div class="t" style="left:546.8px;top:1165.4px;font-family:'Liberation Sans';font-size:27px;color:#939499;font-weight:400;font-style:normal;letter-spacing:0.329px;;-webkit-text-stroke:0.12px #939499;transform:scaleY(1.05);transform-origin:0 24.4px">should match to @option options [Boolean]</div>
<div class="t" style="left:1098.0px;top:1170.1px;font-family:'Liberation Mono';font-size:23.9px;color:#a9c7bf;font-weight:700;font-style:normal;letter-spacing:0.000px;">:url</div>
<div class="t" style="left:1171.3px;top:1165.4px;font-family:'Liberation Sans';font-size:27px;color:#939499;font-weight:400;font-style:normal;letter-spacing:0.582px;;-webkit-text-stroke:0.12px #939499;transform:scaleY(1.05);transform-origin:0 24.4px">(true if `string` is a full</div>
<div class="t" style="left:546.8px;top:1203.6px;font-family:'Liberation Sans';font-size:27px;color:#939499;font-weight:400;font-style:normal;letter-spacing:0.356px;;-webkit-text-stroke:0.12px #939499;transform:scaleY(1.05);transform-origin:0 24.4px">url, otherwise false) Whether the comparison should be done against the full</div>
<div class="t" style="left:546.8px;top:1240.6px;font-family:'Liberation Sans';font-size:27px;color:#939499;font-weight:400;font-style:normal;letter-spacing:0.364px;;-webkit-text-stroke:0.12px #939499;transform:scaleY(1.05);transform-origin:0 24.4px">current url or just the path @option options [Boolean]</div>
<div class="t" style="left:1218.0px;top:1245.6px;font-family:'Liberation Mono';font-size:23.9px;color:#a9c7bf;font-weight:700;font-style:normal;letter-spacing:0.000px;">:ignore_query</div>
<div class="t" style="left:102.4px;top:1284.8px;font-family:'Liberation Sans';font-size:27.5px;color:#b4b6bb;font-weight:400;font-style:normal;letter-spacing:1.309px;;-webkit-text-stroke:0.3px #b4b6bb;transform:scaleY(1.05);transform-origin:0 24.9px">Capybara</div>
<div class="t" style="left:280.6px;top:1284.8px;font-family:'Liberation Sans';font-size:27.5px;color:#b4b6bb;font-weight:400;font-style:normal;letter-spacing:1.034px;;-webkit-text-stroke:0.3px #b4b6bb;transform:scaleY(1.05);transform-origin:0 24.9px">SessionMatchers</div>
<div class="t" style="left:14.0px;top:1338.8px;font-family:'Liberation Sans';font-size:27.5px;color:#a8aaae;font-weight:400;font-style:normal;letter-spacing:0.000px;clip-path:inset(0 0 0 5px);;-webkit-text-stroke:0.3px #a8aaae;transform:scaleY(1.05);transform-origin:0 24.9px">2</div>
<div class="t" style="left:80.0px;top:1338.8px;font-family:'Liberation Sans';font-size:27.5px;color:#a8aaae;font-weight:400;font-style:normal;letter-spacing:0.991px;;-webkit-text-stroke:0.3px #a8aaae;transform:scaleY(1.05);transform-origin:0 24.9px">lib</div>
<div class="t" style="left:161.0px;top:1338.8px;font-family:'Liberation Sans';font-size:27.5px;color:#a8aaae;font-weight:400;font-style:normal;letter-spacing:1.335px;;-webkit-text-stroke:0.3px #a8aaae;transform:scaleY(1.05);transform-origin:0 24.9px">ruby</div>
<div class="t" style="left:268.8px;top:1338.8px;font-family:'Liberation Sans';font-size:27.5px;color:#a8aaae;font-weight:400;font-style:normal;letter-spacing:0.985px;;-webkit-text-stroke:0.3px #a8aaae;transform:scaleY(1.05);transform-origin:0 24.9px">gems</div>
<div class="t" style="left:392.0px;top:1338.8px;font-family:'Liberation Sans';font-size:27.5px;color:#a8aaae;font-weight:400;font-style:normal;letter-spacing:-0.292px;;-webkit-text-stroke:0.3px #a8aaae;transform:scaleY(1.05);transform-origin:0 24.9px">3.1.0</div>
<div class="t" style="left:502.0px;top:1338.8px;font-family:'Liberation Sans';font-size:27.5px;color:#a8aaae;font-weight:400;font-style:normal;letter-spacing:1.151px;;-webkit-text-stroke:0.3px #a8aaae;transform:scaleY(1.05);transform-origin:0 24.9px">gems</div>
<div class="t" style="left:624.4px;top:1338.8px;font-family:'Liberation Sans';font-size:27.5px;color:#a8aaae;font-weight:400;font-style:normal;letter-spacing:1.204px;;-webkit-text-stroke:0.3px #a8aaae;transform:scaleY(1.05);transform-origin:0 24.9px">capybara-3.37.1</div>
<div class="t" style="left:890.0px;top:1338.8px;font-family:'Liberation Sans';font-size:27.5px;color:#a8aaae;font-weight:400;font-style:normal;letter-spacing:0.741px;;-webkit-text-stroke:0.3px #a8aaae;transform:scaleY(1.05);transform-origin:0 24.9px">lib</div>
<div class="t" style="left:969.5px;top:1338.8px;font-family:'Liberation Sans';font-size:27.5px;color:#a8aaae;font-weight:400;font-style:normal;letter-spacing:1.338px;;-webkit-text-stroke:0.3px #a8aaae;transform:scaleY(1.05);transform-origin:0 24.9px">capybara</div>
<div class="t" style="left:1143.0px;top:1338.8px;font-family:'Liberation Sans';font-size:27.5px;color:#a8aaae;font-weight:400;font-style:normal;letter-spacing:0.793px;;-webkit-text-stroke:0.3px #a8aaae;transform:scaleY(1.05);transform-origin:0 24.9px">session</div>
<div class="t" style="left:1330.7px;top:1338.8px;font-family:'Liberation Sans';font-size:27.5px;color:#a8aaae;font-weight:400;font-style:normal;letter-spacing:1.182px;;-webkit-text-stroke:0.3px #a8aaae;transform:scaleY(1.05);transform-origin:0 24.9px">matchers.rb</div>
<div class="t" style="left:1578.7px;top:1338.8px;font-family:'Liberation Sans';font-size:27.5px;color:#a8aaae;font-weight:400;font-style:normal;letter-spacing:1.095px;;-webkit-text-stroke:0.3px #a8aaae;transform:scaleY(1.05);transform-origin:0 24.9px">Capybara</div>
<div class="t" style="left:1796.5px;top:1338.8px;font-family:'Liberation Sans';font-size:27.5px;color:#a8aaae;font-weight:400;font-style:normal;letter-spacing:1.112px;;-webkit-text-stroke:0.3px #a8aaae;transform:scaleY(1.05);transform-origin:0 24.9px">SessionMatchers</div>
</body></html>
